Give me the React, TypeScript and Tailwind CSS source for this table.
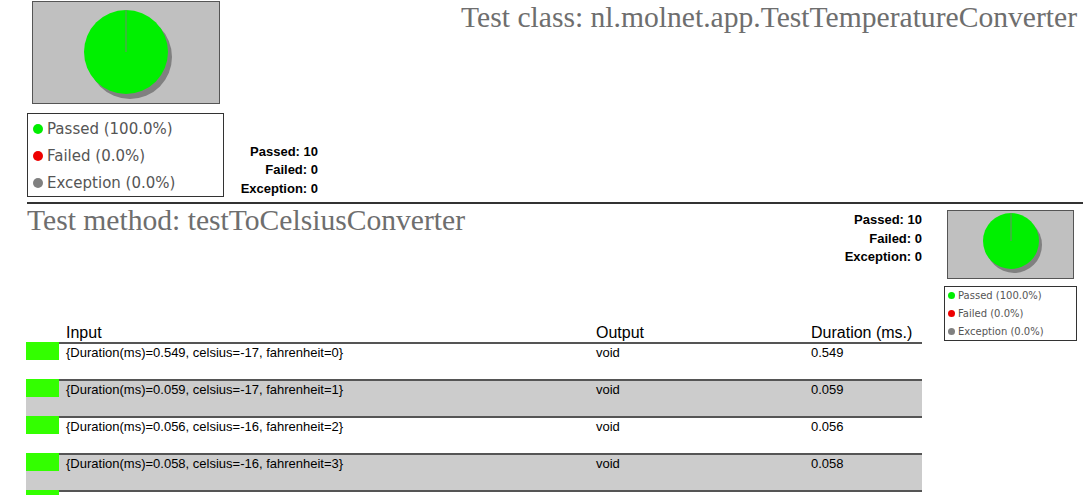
const rows = [
  { input: "{Duration(ms)=0.549, celsius=-17, fahrenheit=0}", output: "void", duration: "0.549" },
  { input: "{Duration(ms)=0.059, celsius=-17, fahrenheit=1}", output: "void", duration: "0.059" },
  { input: "{Duration(ms)=0.056, celsius=-16, fahrenheit=2}", output: "void", duration: "0.056" },
  { input: "{Duration(ms)=0.058, celsius=-16, fahrenheit=3}", output: "void", duration: "0.058" }
];

const legend = [
  { label: "Passed (100.0%)", color: "bg-[#00ee00]" },
  { label: "Failed (0.0%)", color: "bg-[#ee0000]" },
  { label: "Exception (0.0%)", color: "bg-[#808080]" }
];

function Pie({ w, h, cx, cy, r, off }: { w: number; h: number; cx: number; cy: number; r: number; off: number }) {
  return (
    <svg width={w} height={h} className="block">
      <circle cx={cx + off} cy={cy + off + 1} r={r} fill="#808080" />
      <circle cx={cx} cy={cy} r={r} fill="#00f000" />
      <line x1={cx} y1={cy} x2={cx} y2={cy - r} stroke="#6a8a6a" strokeWidth="1" />
    </svg>
  );
}

function Stats({ className }: { className: string }) {
  return (
    <div className={`text-right text-[13px] font-bold leading-[18.5px] text-black ${className}`} style={{ fontFamily: '"Liberation Sans", Arial, sans-serif' }}>
      <div>Passed: 10</div>
      <div>Failed: 0</div>
      <div>Exception: 0</div>
    </div>
  );
}

export default function App() {
  const serif = { fontFamily: '"Liberation Serif", "Times New Roman", serif' };
  const tahoma = { fontFamily: '"DejaVu Sans", Tahoma, sans-serif' };
  const arial = { fontFamily: '"Liberation Sans", Arial, sans-serif' };

  return (
    <div className="h-[495px] w-[1083px] overflow-hidden bg-white">
      {/* class summary */}
      <div className="flex h-[202px]">
        <div className="ml-[27px] w-[197px] shrink-0">
          <div className="ml-[5px] mt-[1px] h-[103px] w-[188px] border border-[#555] bg-[#c0c0c0]">
            <Pie w={186} h={101} cx={93} cy={50} r={42} off={4} />
          </div>
          <div className="mt-[9px] flex h-[84px] w-[197px] flex-col justify-center gap-[7px] border border-[#333] pl-[5px] pt-[1px] text-[15px] leading-[20px] text-[#555]" style={tahoma}>
            {legend.map((l) => (
              <div key={l.label} className="flex items-center gap-[4px]">
                <span className={`h-[10px] w-[10px] rounded-full ${l.color}`} />
                <span>{l.label}</span>
              </div>
            ))}
          </div>
        </div>
        <Stats className="mb-[4px] w-[94px] shrink-0 self-end" />
        <div className="flex-1 pr-[6px] text-right text-[29.6px] leading-[34px] text-[#6e6e6e]" style={serif}>
          Test class: nl.molnet.app.TestTemperatureConverter
        </div>
      </div>

      <div className="ml-[27px] h-[2px] bg-[#333]" />

      {/* method */}
      <div className="flex">
        <div className="ml-[26px] w-[896px] shrink-0">
          <div className="flex justify-between">
            <div className="pl-[1px] text-[29.6px] leading-[32px] text-[#6e6e6e]" style={serif}>
              Test method: testToCelsiusConverter
            </div>
            <Stats className="mt-[7px]" />
          </div>

          <div className="mt-[55px]" style={arial}>
            <div className="flex h-[20px] pt-[2px] text-[16px] leading-[18px] text-black">
              <div className="w-[33px] shrink-0" />
              <div className="w-[530px] shrink-0 pl-[7px]">Input</div>
              <div className="w-[215px] shrink-0 pl-[7px]">Output</div>
              <div className="flex-1 pl-[7px]">Duration (ms.)</div>
            </div>
            {rows.map((r, i) => (
              <div key={i} className={`flex h-[37px] ${i % 2 === 1 ? "bg-[#cccccc]" : "bg-white"}`}>
                <div className="w-[33px] shrink-0">
                  <div className="h-[18px] bg-[#33ff00]" />
                </div>
                <div className="flex flex-1 border-t-2 border-[#555] pt-[1px] text-[13px] leading-[15px] text-black">
                  <div className="w-[530px] shrink-0 pl-[7px]">{r.input}</div>
                  <div className="w-[215px] shrink-0 pl-[7px]">{r.output}</div>
                  <div className="flex-1 pl-[7px]">{r.duration}</div>
                </div>
              </div>
            ))}
            {/* next row, cut off by the window */}
            <div className="flex h-[37px] bg-white">
              <div className="w-[33px] shrink-0">
                <div className="h-[18px] bg-[#33ff00]" />
              </div>
              <div className="flex-1 border-t-2 border-[#555]" />
            </div>
          </div>
        </div>

        <div className="ml-[22px] w-[133px] shrink-0">
          <div className="ml-[3px] mt-[6px] h-[69px] w-[127px] border border-[#555] bg-[#c0c0c0]">
            <Pie w={125} h={67} cx={63} cy={30} r={28} off={3} />
          </div>
          <div className="mt-[7px] flex h-[55px] w-[133px] flex-col justify-center gap-[5px] border border-[#333] pl-[3px] text-[10px] leading-[13px] text-[#555]" style={tahoma}>
            {legend.map((l) => (
              <div key={l.label} className="flex items-center gap-[3px]">
                <span className={`h-[7px] w-[7px] rounded-full ${l.color}`} />
                <span>{l.label}</span>
              </div>
            ))}
          </div>
        </div>
      </div>
    </div>
  );
}
